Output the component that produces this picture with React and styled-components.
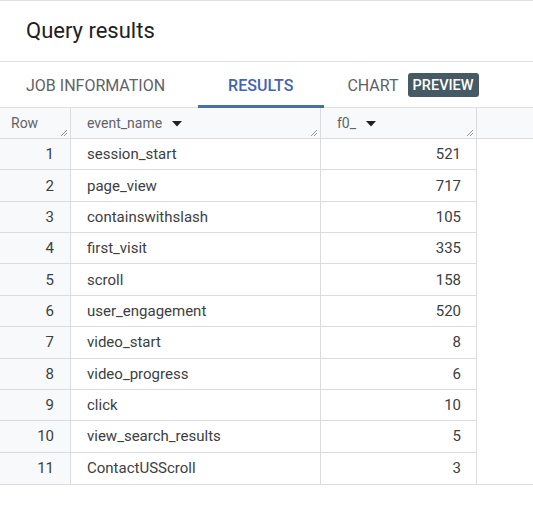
import React from 'react';
import styled, { createGlobalStyle } from 'styled-components';

const GlobalStyle = createGlobalStyle`
  html, body {
    margin: 0;
    padding: 0;
    background: #fff;
    font-family: Roboto, "Liberation Sans", Arial, sans-serif;
  }
`;

const rows = [
  ['session_start', 521],
  ['page_view', 717],
  ['containswithslash', 105],
  ['first_visit', 335],
  ['scroll', 158],
  ['user_engagement', 520],
  ['video_start', 8],
  ['video_progress', 6],
  ['click', 10],
  ['view_search_results', 5],
  ['ContactUSScroll', 3],
];

const App = () => {
  return (
    <>
      <GlobalStyle />
      <Page>
        <TitleBar>
          <Title>Query results</Title>
        </TitleBar>
        <Tabs>
          <Tab padLeft={26} padRight={33}>JOB INFORMATION</Tab>
          <Tab active padLeft={30} padRight={31}>RESULTS</Tab>
          <Tab padLeft={23} padRight={10}>
            CHART
            <Badge>PREVIEW</Badge>
          </Tab>
        </Tabs>
        <HeaderRow>
          <HeadCell>
            Row
            <ResizeHandle />
          </HeadCell>
          <HeadCell indent={16}>
            event_name
            <SortArrow />
            <ResizeHandle />
          </HeadCell>
          <HeadCell indent={16}>
            f0_
            <SortArrow />
            <ResizeHandle />
          </HeadCell>
          <Filler />
        </HeaderRow>
        <Body>
          {rows.map(([name, value], i) => (
            <Row key={name} last={i === rows.length - 1}>
              <NumCell>{i + 1}</NumCell>
              <NameCell>{name}</NameCell>
              <ValueCell>{value}</ValueCell>
            </Row>
          ))}
        </Body>
      </Page>
    </>
  );
};

const ResizeHandle = () => (
  <Handle width="8" height="8" viewBox="0 0 8 8">
    <path d="M1 7 L7 1 M4 7 L7 4" stroke="#8a8a8a" strokeWidth="0.9" fill="none" />
  </Handle>
);

const SortArrow = () => (
  <Arrow width="10" height="6" viewBox="0 0 10 6">
    <path d="M0 0 L10 0 L5 5.5 Z" fill="#202124" />
  </Arrow>
);

export default App;

const Page = styled.div`
  width: 533px;
  border-top: 1px solid #e0e0e0;
  color: #3c4043;
`;

const TitleBar = styled.div`
  height: 60px;
  display: flex;
  align-items: center;
  padding-left: 26px;
  border-bottom: 1px solid #e0e0e0;
`;

const Title = styled.h1`
  margin: 0;
  font-size: 22px;
  font-weight: 400;
  color: #202124;
  position: relative;
  top: -1px;
`;

const Tabs = styled.div`
  height: 45px;
  display: flex;
  align-items: stretch;
  border-bottom: 1px solid #e0e0e0;
`;

const Tab = styled.div`
  display: flex;
  align-items: center;
  padding: 0 ${p => p.padRight}px 0 ${p => p.padLeft}px;
  font-size: 16px;
  font-weight: ${p => (p.active ? 500 : 400)};
  color: ${p => (p.active ? '#4464b4' : '#5f6368')};
  box-shadow: ${p => (p.active ? 'inset 0 -3px 0 #4a6ea8' : 'none')};
  margin-bottom: -1px;
`;

const Badge = styled.span`
  margin-left: 9px;
  background: #455a64;
  color: #fff;
  font-size: 14.5px;
  font-weight: 500;
  padding: 4px 5px 3px;
  border-radius: 3px;
  line-height: 17px;
`;

const HeaderRow = styled.div`
  display: grid;
  grid-template-columns: 71px 250px 156px 1fr;
  height: 30px;
  background: #f8f9fa;
  border-bottom: 1px solid #dadce0;
`;

const HeadCell = styled.div`
  position: relative;
  display: flex;
  align-items: center;
  padding-left: ${p => p.indent || 11}px;
  border-right: 1px solid #dadce0;
  font-size: 14px;
  color: #5f6368;
`;

const Filler = styled.div``;

const Handle = styled.svg`
  position: absolute;
  right: 2px;
  bottom: 1px;
`;

const Arrow = styled.svg`
  margin-left: 10px;
  margin-top: 1px;
`;

const Body = styled.div`
  border-bottom: 1px solid #dadce0;
`;

const Row = styled.div`
  display: grid;
  grid-template-columns: 71px 250px 156px;
  width: 477px;
  height: 31.36px;
  box-sizing: border-box;
  border-bottom: ${p => (p.last ? 'none' : '1px solid #dadce0')};
  font-size: 15px;
`;

const Cell = styled.div`
  display: flex;
  align-items: center;
  border-right: 1px solid #dadce0;
`;

const NumCell = styled(Cell)`
  justify-content: flex-end;
  padding-right: 16px;
  background: #f8f9fa;
`;

const NameCell = styled(Cell)`
  padding-left: 16px;
`;

const ValueCell = styled(Cell)`
  justify-content: flex-end;
  padding-right: 15px;
`;
